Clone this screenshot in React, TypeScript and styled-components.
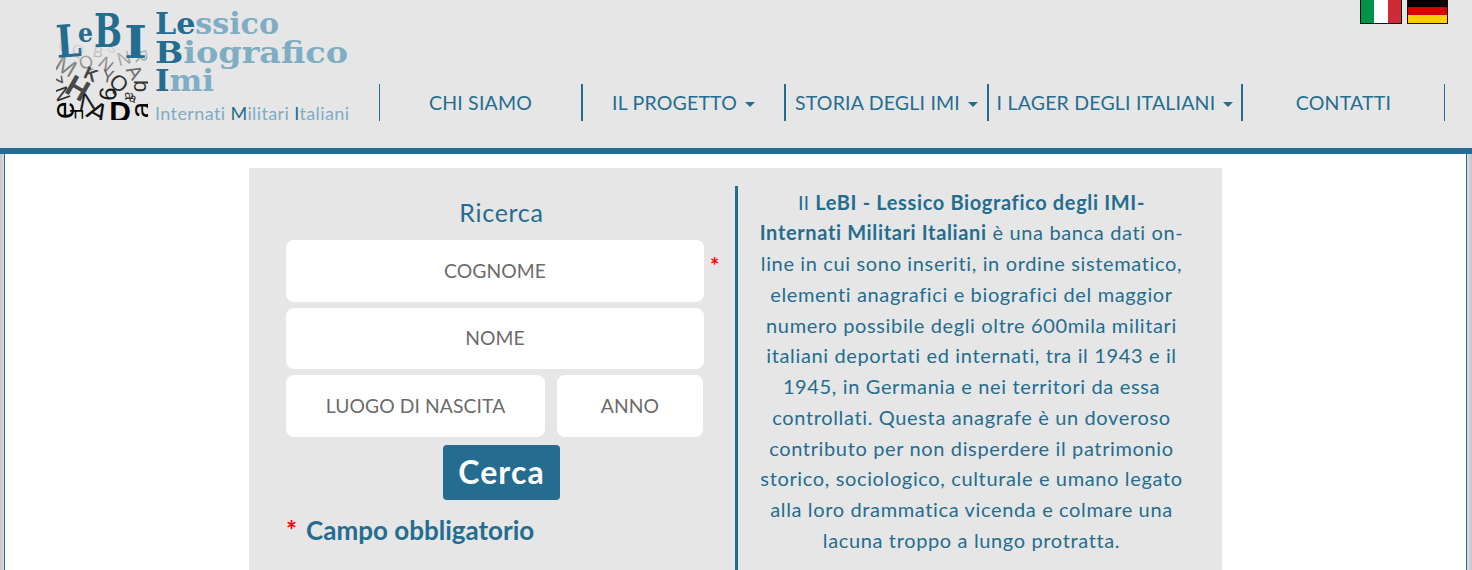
import React from "react";
import styled, { createGlobalStyle } from "styled-components";

const TEAL = "#246d90";
const LIGHT = "#7eadc4";
const FONT = `"Lato", "Noto Sans", sans-serif`;

const Global = createGlobalStyle`
  html, body { margin: 0; padding: 0; background: #fff; height: 570px; overflow: hidden; }
  body { font-family: ${FONT}; color: ${TEAL}; }
  * { box-sizing: border-box; }
`;

const Header = styled.header`
  display: flex;
  height: 154px;
  padding-left: 50px;
  background: #e6e6e6;
  border-bottom: 6px solid ${TEAL};
`;
const Logo = styled.svg`
  display: block;
  flex: none;
  width: 300px;
  height: 130px;
`;
const HeaderRight = styled.div`
  flex: 1;
  display: flex;
  flex-direction: column;
  margin-left: 29px;
`;
const Flags = styled.div`
  display: flex;
  justify-content: flex-end;
  gap: 5px;
  height: 24px;
  padding-right: 24px;
`;
const Flag = styled.svg`
  display: block;
  height: 24px;
`;
const Nav = styled.nav`
  display: flex;
  width: 1066px;
  height: 37px;
  margin-top: 60px;
  border-right: 1px solid ${TEAL};
`;
const NavItem = styled.a<{ $w: number; $thin?: boolean }>`
  flex: none;
  width: ${(p) => p.$w}px;
  display: flex;
  align-items: center;
  justify-content: center;
  border-left: ${(p) => (p.$thin ? 1 : 2)}px solid ${TEAL};
  font-size: 19.5px;
  line-height: 36px;
  letter-spacing: 0.2px;
  white-space: nowrap;
  color: ${TEAL};
`;
const Caret = styled.span`
  display: inline-block;
  margin-left: 8px;
  margin-top: 3px;
  border-top: 5px solid ${TEAL};
  border-left: 5px solid transparent;
  border-right: 5px solid transparent;
`;
const Frame = styled.div`
  height: 416px;
  padding: 0 5px 0 4px;
  background: linear-gradient(90deg, #c6c6c6, #dcdcdc 4px, transparent 4px, transparent calc(100% - 5px), #dcdcdc calc(100% - 5px), #c6c6c6);
`;
const Shell = styled.main`
  height: 416px;
  display: flex;
  justify-content: center;
  padding-top: 14px;
  background: #fff;
  border-left: 1px solid ${TEAL};
  border-right: 1px solid ${TEAL};
`;
const Panel = styled.section`
  width: 973px;
  height: 402px;
  display: flex;
  padding-top: 18px;
  background: #e6e6e6;
`;
const SearchCol = styled.div`
  flex: none;
  width: 486px;
  padding-left: 37px;
`;
const SearchInner = styled.form`
  width: 431px;
  display: flex;
  flex-direction: column;
  margin: 0;
`;
const Title = styled.h2`
  height: 41px;
  margin: 0 0 13px;
  display: flex;
  align-items: flex-end;
  justify-content: center;
  font-size: 25px;
  line-height: 30px;
  font-weight: 400;
  letter-spacing: 0.7px;
`;
const Row = styled.div<{ $gap?: number }>`
  display: flex;
  gap: ${(p) => p.$gap ?? 0}px;
  margin-bottom: 6px;
`;
const Field = styled.input<{ $w: number; $h?: number }>`
  flex: none;
  width: ${(p) => p.$w}px;
  height: ${(p) => p.$h ?? 62}px;
  padding: 0 0 2px;
  border: 0;
  border-radius: 8px;
  outline: 0;
  background: #fff;
  text-align: center;
  font: 400 19.3px ${FONT};
  letter-spacing: 0.1px;
  &::placeholder { color: #6b6b6b; opacity: 1; }
`;
const Req = styled.span`
  margin: 16px 0 0 6px;
  color: #f00;
  font-size: 22px;
  font-weight: 700;
  line-height: 20px;
`;
const SubmitRow = styled.div`
  display: flex;
  justify-content: center;
  margin-top: 2px;
`;
const Submit = styled.button`
  width: 117px;
  height: 55px;
  padding: 0 0 3px;
  border: 0;
  border-radius: 4px;
  background: ${TEAL};
  color: #fff;
  font: 700 32px ${FONT};
  letter-spacing: 1.1px;
`;
const Note = styled.p`
  margin: 13px 0 0;
  font-size: 26px;
  line-height: 34px;
  font-weight: 700;
  white-space: nowrap;
`;
const NoteStar = styled.span`
  color: #f00;
  margin-right: 9px;
`;
const Intro = styled.div`
  flex: none;
  width: 487px;
  height: 384px;
  padding: 0.5px 17px 0 0;
  border-left: 3px solid ${TEAL};
  text-align: center;
  font-size: 20px;
  line-height: 30.75px;
  letter-spacing: 0.64px;
  white-space: nowrap;
`;

// text, centre x, centre y, size, colour, rotation, weight
const collage: [string, number, number, number, string, number, number?][] = [
  ["G", 64, 46, 14, "#bbb", -20], ["Q", 78, 50, 15, "#b0b0b0", 15], ["B", 98, 52, 15, "#aaa", 10],
  ["S", 112, 48, 13, "#bbb", 25], ["N", 124, 58, 19, "#999", -15], ["R", 141, 56, 18, "#999", 80],
  ["M", 66, 66, 24, "#808080", 30], ["Q", 86, 62, 18, "#8c8c8c", -20], ["N", 106, 64, 18, "#808080", 40],
  ["A", 135, 72, 20, "#6c6c6c", 60], ["z", 59, 80, 20, "#555", 80], ["Y", 108, 76, 18, "#666", 10],
  ["H", 78, 88, 30, "#484848", 30, 700], ["K", 91, 74, 18, "#444", 25, 700],
  ["Q", 119, 83, 22, "#333", 40], ["b", 142, 86, 22, "#333", 90], ["a", 130, 96, 15, "#333", 90],
  ["N", 62, 94, 20, "#333", 70], ["9", 108, 94, 24, "#1c1c1c", 95], ["V", 86, 102, 24, "#1c1c1c", 170],
  ["e", 63, 110, 32, "#000", -90], ["F", 76, 114, 18, "#000", 90], ["A", 98, 112, 28, "#111", 30],
  ["D", 120, 111, 30, "#000", 0, 700], ["a", 140, 110, 30, "#0c0c0c", -90], ["a", 133, 98, 12, "#222", 20],
];

function LogoArt() {
  return (
    <Logo viewBox="50 0 300 130" aria-label="LeBI Lessico Biografico Imi">
      <defs>
        <clipPath id="cl"><rect x="56" y="36" width="92" height="84" /></clipPath>
        <linearGradient id="fd" x1="0" y1="0" x2="0" y2="1">
          <stop offset="0" stopColor="#e6e6e6" stopOpacity="0.9" />
          <stop offset="1" stopColor="#e6e6e6" stopOpacity="0" />
        </linearGradient>
      </defs>
      <g clipPath="url(#cl)" fontFamily="Liberation Sans, sans-serif">
        {collage.map(([t, x, y, s, c, r, w], i) => (
          <text key={i} x={x} y={y + s * 0.35} fontSize={s} fill={c} fontWeight={w ?? 400} textAnchor="middle" transform={`rotate(${r} ${x} ${y})`}>{t}</text>
        ))}
        <rect x="56" y="36" width="92" height="30" fill="url(#fd)" />
      </g>
      <g fontFamily="DejaVu Serif, serif" fontWeight="700" fill={TEAL}>
        <text x="56" y="57" fontSize="45" textLength="25" lengthAdjust="spacingAndGlyphs" transform="rotate(-4 68 40)">L</text>
        <text x="78" y="42" fontSize="26" textLength="15" lengthAdjust="spacingAndGlyphs">e</text>
        <text x="94" y="47" fontSize="47" textLength="28" lengthAdjust="spacingAndGlyphs">B</text>
        <text x="124" y="58" fontSize="45" textLength="23" lengthAdjust="spacingAndGlyphs">I</text>
      </g>
      <g fontFamily="DejaVu Serif, serif" fontSize="30" fill={LIGHT} fontWeight="700">
        <text x="155" y="34" textLength="124" lengthAdjust="spacingAndGlyphs"><tspan fill={TEAL}>Le</tspan>ssico</text>
        <text x="155" y="63" textLength="193" lengthAdjust="spacingAndGlyphs"><tspan fill={TEAL}>B</tspan>iografico</text>
        <text x="155" y="91" textLength="59" lengthAdjust="spacingAndGlyphs"><tspan fill={TEAL}>I</tspan>mi</text>
      </g>
      <text x="155" y="120" fontFamily="Lato, sans-serif" fontSize="18" fill={LIGHT} textLength="194" style={{ fontVariantLigatures: "none" }}>Internati <tspan fill={TEAL}>M</tspan>ilitari <tspan fill={TEAL}>I</tspan>taliani</text>
    </Logo>
  );
}

export default function App() {
  return (
    <>
      <Global />
      <Header>
        <LogoArt />
        <HeaderRight>
          <Flags>
            <Flag width={42} viewBox="0 0 42 24">
              <rect width="42" height="24" fill="#111" />
              <rect x="1" width="13" height="23" fill="#009246" />
              <rect x="14" width="14" height="23" fill="#fff" />
              <rect x="28" width="13" height="23" fill="#ce2b37" />
            </Flag>
            <Flag width={41} viewBox="0 0 41 24">
              <rect width="41" height="24" fill="#111" />
              <rect x="1" width="39" height="7" fill="#000" />
              <rect x="1" y="7" width="39" height="8" fill="#dd0000" />
              <rect x="1" y="15" width="39" height="8" fill="#ffce00" />
            </Flag>
          </Flags>
          <Nav>
            <NavItem $w={202} $thin>CHI SIAMO</NavItem>
            <NavItem $w={203}>IL PROGETTO<Caret /></NavItem>
            <NavItem $w={203}>STORIA DEGLI IMI<Caret /></NavItem>
            <NavItem $w={254}>I LAGER DEGLI ITALIANI<Caret /></NavItem>
            <NavItem $w={203}>CONTATTI</NavItem>
          </Nav>
        </HeaderRight>
      </Header>
      <Frame>
        <Shell>
          <Panel>
            <SearchCol>
              <SearchInner>
                <Title>Ricerca</Title>
                <Row>
                  <Field $w={418} placeholder="COGNOME" />
                  <Req>*</Req>
                </Row>
                <Row>
                  <Field $w={418} $h={61} placeholder="NOME" />
                </Row>
                <Row $gap={12}>
                  <Field $w={259} placeholder="LUOGO DI NASCITA" />
                  <Field $w={146} placeholder="ANNO" />
                </Row>
                <SubmitRow><Submit type="button">Cerca</Submit></SubmitRow>
                <Note><NoteStar>*</NoteStar>Campo obbligatorio</Note>
              </SearchInner>
            </SearchCol>
            <Intro>
              Il <b>LeBI - Lessico Biografico degli IMI-</b><br />
              <b>Internati Militari Italiani</b> è una banca dati on-<br />
              line in cui sono inseriti, in ordine sistematico,<br />
              elementi anagrafici e biografici del maggior<br />
              numero possibile degli oltre 600mila militari<br />
              italiani deportati ed internati, tra il 1943 e il<br />
              1945, in Germania e nei territori da essa<br />
              controllati. Questa anagrafe è un doveroso<br />
              contributo per non disperdere il patrimonio<br />
              storico, sociologico, culturale e umano legato<br />
              alla loro drammatica vicenda e colmare una<br />
              lacuna troppo a lungo protratta.
            </Intro>
          </Panel>
        </Shell>
      </Frame>
    </>
  );
}
